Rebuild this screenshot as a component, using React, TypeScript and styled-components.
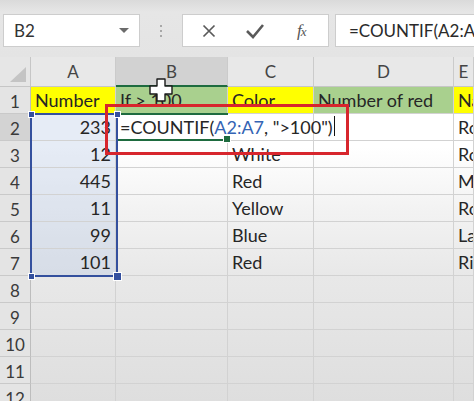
import React from "react";
import styled, { createGlobalStyle } from "styled-components";

const GlobalStyle = createGlobalStyle`
  html, body {
    margin: 0;
    padding: 0;
    background: #e3e3e3;
    overflow: hidden;
  }
  * { box-sizing: border-box; }
`;

const COLS = [31, 85, 112, 86, 140];
const ROW_H = 27;
const HEAD_H = 30;

const YELLOW = "#ffff00";
const GREEN = "#a9d08e";
const RANGE_BLUE = "#34509e";
const EXCEL_GREEN = "#1e6b3f";

const Window = styled.div`
  width: 474px;
  height: 401px;
  overflow: hidden;
  font-family: Lato, "Open Sans", sans-serif;
  color: #262626;
`;

// ---- formula bar ----
const Bar = styled.div`
  height: 57px;
  display: flex;
  align-items: flex-start;
  padding: 14px 0 0 3px;
  background: linear-gradient(#dadada 0, #e6e6e6 12px, #e4e4e4 100%);
`;

const Box = styled.div<{ $w?: number }>`
  height: 33px;
  background: #ffffff;
  border: 1px solid #cdcdcd;
  display: flex;
  align-items: center;
  ${(p) => (p.$w ? `width: ${p.$w}px; flex: none;` : "flex: 1;")}
`;

const NameText = styled.span`
  flex: 1;
  padding-left: 10px;
  font-size: 17px;
  color: #333;
`;

const Caret = styled.span`
  width: 0;
  height: 0;
  margin-right: 10px;
  border-left: 5px solid transparent;
  border-right: 5px solid transparent;
  border-top: 5px solid #6b6b6b;
`;

const Grip = styled.div`
  width: 42px;
  height: 33px;
  flex: none;
  display: flex;
  flex-direction: column;
  align-items: center;
  justify-content: center;
  gap: 3px;
`;

const Dot = styled.span`
  width: 2px;
  height: 2px;
  background: #a8a8a8;
`;

const Tools = styled(Box)`
  justify-content: flex-start;
  gap: 28px;
  padding-left: 18px;
  margin-right: 6px;
`;

const Fx = styled.span`
  margin-left: 4px;
  font-family: "Liberation Serif", serif;
  font-style: italic;
  font-size: 17px;
  color: #555;
  letter-spacing: -1px;

  small {
    font-size: 13px;
  }
`;

const FormulaText = styled.span`
  padding-left: 13px;
  font-size: 17px;
  white-space: nowrap;
  color: #2a2a2a;
`;

// ---- sheet ----
const Sheet = styled.div`
  position: relative;
  display: grid;
  grid-template-columns: ${COLS.map((c) => `${c}px`).join(" ")} 1fr;
  grid-template-rows: ${HEAD_H}px;
  grid-auto-rows: ${ROW_H}px;
  background: linear-gradient(
    #ffffff 0,
    #ffffff 90px,
    #f3f3f3 150px,
    #e8e8e8 220px,
    #dedede 344px
  );
`;

const Corner = styled.div`
  position: relative;
  background: #e6e6e6;
  border-right: 1px solid #c6c6c6;
  border-bottom: 1px solid #c6c6c6;

  &::after {
    content: "";
    position: absolute;
    right: 4px;
    bottom: 4px;
    border-left: 16px solid transparent;
    border-bottom: 15px solid #c4c4c4;
  }
`;

const ColHead = styled.div<{ $on?: boolean }>`
  display: flex;
  align-items: center;
  justify-content: center;
  font-size: 17px;
  color: #444;
  background: ${(p) => (p.$on ? "#d2d2d2" : "#e8e8e8")};
  border-right: 1px solid #cbcbcb;
  border-bottom: ${(p) => (p.$on ? `2px solid ${EXCEL_GREEN}` : "1px solid #c6c6c6")};
`;

const RowHead = styled.div<{ $on?: boolean }>`
  display: flex;
  align-items: center;
  justify-content: center;
  padding-top: 2px;
  font-size: 17px;
  color: #3a3a3a;
  background: ${(p) => (p.$on ? "#d3d3d3" : "#e4e4e4")};
  border-right: 1px solid #bdbdbd;
  border-bottom: 1px solid #c9c9c9;
`;

const Cell = styled.div<{ $bg?: string; $right?: boolean; $tint?: boolean; $open?: boolean }>`
  display: flex;
  align-items: flex-end;
  justify-content: ${(p) => (p.$right ? "flex-end" : "flex-start")};
  padding: 0 4px 2px 4px;
  font-size: 18px;
  line-height: 22px;
  white-space: nowrap;
  overflow: ${(p) => (p.$open ? "visible" : "hidden")};
  position: relative;
  z-index: ${(p) => (p.$open ? 1 : 0)};
  background: ${(p) => p.$bg ?? (p.$tint ? "rgba(176, 196, 228, 0.32)" : "transparent")};
  border-right: ${(p) => (p.$open ? "none" : "1px solid #d2d2d2")};
  border-bottom: 1px solid #d2d2d2;
`;

const Ref = styled.span`
  color: #3464b4;
`;

const TextCaret = styled.span`
  flex: none;
  align-self: center;
  width: 1px;
  height: 20px;
  margin-left: 1px;
  background: #111;
`;

// ---- overlays on the grid ----
const RangeBox = styled.div`
  position: absolute;
  left: 30px;
  top: ${HEAD_H + ROW_H - 1}px;
  width: 88px;
  height: ${ROW_H * 6 + 2}px;
  border: 2px solid ${RANGE_BLUE};
  z-index: 3;
  pointer-events: none;
`;

const Handle = styled.span<{ $x: number; $y: number; $big?: boolean }>`
  position: absolute;
  width: ${(p) => (p.$big ? 7 : 5)}px;
  height: ${(p) => (p.$big ? 7 : 5)}px;
  left: ${(p) => p.$x}px;
  top: ${(p) => p.$y}px;
  background: ${RANGE_BLUE};
  border: 1px solid #ffffff;
  box-sizing: content-box;
`;

const ActiveBox = styled.div`
  position: absolute;
  left: 116px;
  top: ${HEAD_H + ROW_H - 1}px;
  width: 112px;
  height: ${ROW_H + 1}px;
  border-top: 2px solid ${EXCEL_GREEN};
  border-bottom: 2px solid ${EXCEL_GREEN};
  z-index: 2;
`;

const FillHandle = styled.span`
  position: absolute;
  right: -3px;
  bottom: -4px;
  width: 6px;
  height: 6px;
  background: ${EXCEL_GREEN};
  border: 1px solid #fff;
  box-sizing: content-box;
`;

const Marker = styled.div`
  position: absolute;
  left: 105px;
  top: 47px;
  width: 244px;
  height: 51px;
  border: 3px solid #d7262d;
  z-index: 4;
`;

const Pointer = styled.svg`
  position: absolute;
  left: 149px;
  top: 21px;
  z-index: 5;
`;

type Row = { a?: string; c?: string; e?: string };

const rows: Row[] = [
  { a: "233", e: "Robert" },
  { a: "12", c: "White", e: "Rose" },
  { a: "445", c: "Red", e: "Mike" },
  { a: "11", c: "Yellow", e: "Ron" },
  { a: "99", c: "Blue", e: "Lara" },
  { a: "101", c: "Red", e: "Rick" },
];

const header = [
  { text: "Number", bg: YELLOW },
  { text: "If > 100", bg: GREEN },
  { text: "Color", bg: YELLOW },
  { text: "Number of red", bg: GREEN },
  { text: "Name", bg: YELLOW },
];

const letters = ["A", "B", "C", "D", "E"];

const App: React.FC = () => {
  return (
    <Window>
      <GlobalStyle />
      <Bar>
        <Box $w={137}>
          <NameText>B2</NameText>
          <Caret />
        </Box>
        <Grip>
          <Dot />
          <Dot />
          <Dot />
        </Grip>
        <Tools $w={147}>
          <svg width="16" height="16" viewBox="0 0 16 16">
            <path d="M2.5 2.5 L13.5 13.5 M13.5 2.5 L2.5 13.5" stroke="#5a5a5a" strokeWidth="1.7" />
          </svg>
          <svg width="20" height="16" viewBox="0 0 20 16">
            <path d="M2 8 L8 14 L18 2" stroke="#5a5a5a" strokeWidth="2.6" fill="none" />
          </svg>
          <Fx>
            f<small>x</small>
          </Fx>
        </Tools>
        <Box>
          <FormulaText>=COUNTIF(A2:A7, "&gt;100")</FormulaText>
        </Box>
      </Bar>

      <Sheet>
        <Corner />
        {letters.map((l) => (
          <ColHead key={l} $on={l === "B"}>
            {l}
          </ColHead>
        ))}

        <RowHead>1</RowHead>
        {header.map((h) => (
          <Cell key={h.text} $bg={h.bg}>
            {h.text}
          </Cell>
        ))}

        {rows.map((r, i) => (
          <React.Fragment key={i}>
            <RowHead $on={i === 0}>{i + 2}</RowHead>
            <Cell $right $tint>
              {r.a}
            </Cell>
            {i === 0 ? (
              <Cell $open>
                <span>
                  =COUNTIF(<Ref>A2:A7</Ref>, "&gt;100")
                </span>
                <TextCaret />
              </Cell>
            ) : (
              <Cell />
            )}
            <Cell>{r.c}</Cell>
            <Cell />
            <Cell>{r.e}</Cell>
          </React.Fragment>
        ))}

        {[8, 9, 10, 11, 12].map((n) => (
          <React.Fragment key={n}>
            <RowHead>{n}</RowHead>
            <Cell />
            <Cell />
            <Cell />
            <Cell />
            <Cell />
          </React.Fragment>
        ))}

        <ActiveBox>
          <FillHandle />
        </ActiveBox>
        <RangeBox>
          <Handle $x={-4} $y={-4} />
          <Handle $x={82} $y={-4} />
          <Handle $x={-4} $y={158} />
          <Handle $x={81} $y={157} $big />
        </RangeBox>
        <Marker />
        <Pointer width="24" height="24" viewBox="0 0 24 24">
          <path
            d="M8 1 H16 V8 H23 V16 H16 V23 H8 V16 H1 V8 H8 Z"
            fill="#ffffff"
            stroke="#1a1a1a"
            strokeWidth="1.4"
            strokeLinejoin="round"
          />
        </Pointer>
      </Sheet>
    </Window>
  );
};

export default App;
